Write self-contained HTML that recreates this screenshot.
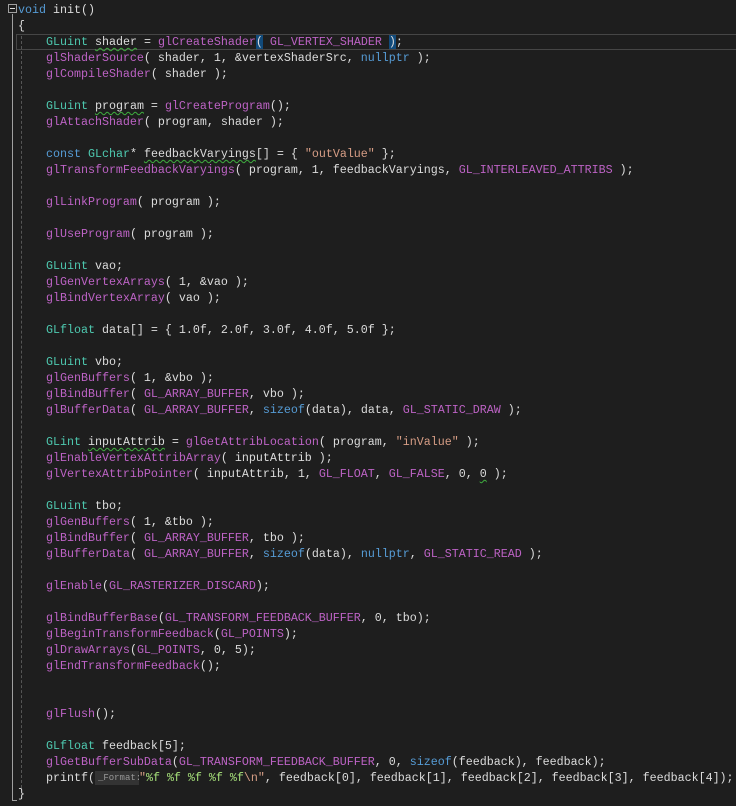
<!DOCTYPE html>
<html><head><meta charset="utf-8"><style>
html,body{margin:0;padding:0;background:#1e1e1e;width:736px;height:806px;overflow:hidden}
#c{position:absolute;left:0;top:0;width:736px;height:806px}
.l{position:absolute;left:18px;height:16px;line-height:16px;white-space:pre;font-family:"Liberation Mono",monospace;font-size:11.67px;color:#dcdcdc}
.t{color:#4ec9b0}.f{color:#bd63c5}.k{color:#569cd6}.s{color:#d69d85}.n{color:#b5cea8}.g{color:#a6e07a}
.w{text-decoration:underline wavy #3fae3f;text-decoration-thickness:1px;text-underline-offset:2px}
.h{display:inline-block;background:#333;color:#999;font-size:9px;padding:0 3px;height:14px;line-height:14px;vertical-align:top;margin-top:1px;width:44px;box-sizing:border-box;overflow:hidden}
</style></head><body><div id="c">
<div style="position:absolute;left:8px;top:4px;width:9px;height:9px;border:1px solid #a0a0a0;box-sizing:border-box"></div>
<div style="position:absolute;left:10px;top:8px;width:5px;height:1px;background:#dcdcdc"></div>
<div style="position:absolute;left:12px;top:14px;width:1px;height:787px;background:#a0a0a0"></div>
<div style="position:absolute;left:12px;top:800px;width:5px;height:1px;background:#a0a0a0"></div>
<div style="position:absolute;left:21px;top:36px;width:0;height:752px;border-left:1px dashed #555"></div>
<div style="position:absolute;left:16px;top:34px;width:722px;height:16px;border:1px solid #464646;box-sizing:border-box"></div>
<div id="code"></div>
</div>
<script>
var L=[
'<span class="k">void</span> init()',
'{',
'    <span class="t">GLuint</span> <span class="w">shader</span> = <span class="f">glCreateShader</span><span style="background:#114a7a">(</span> <span class="f">GL_VERTEX_SHADER</span> <span style="background:#114a7a">)</span>;',
'    <span class="f">glShaderSource</span>( shader, 1, &vertexShaderSrc, <span class="k">nullptr</span> );',
'    <span class="f">glCompileShader</span>( shader );',
'',
'    <span class="t">GLuint</span> <span class="w">program</span> = <span class="f">glCreateProgram</span>();',
'    <span class="f">glAttachShader</span>( program, shader );',
'',
'    <span class="k">const</span> <span class="t">GLchar</span>* <span class="w">feedbackVaryings</span>[] = { <span class="s">"outValue"</span> };',
'    <span class="f">glTransformFeedbackVaryings</span>( program, 1, feedbackVaryings, <span class="f">GL_INTERLEAVED_ATTRIBS</span> );',
'',
'    <span class="f">glLinkProgram</span>( program );',
'',
'    <span class="f">glUseProgram</span>( program );',
'',
'    <span class="t">GLuint</span> vao;',
'    <span class="f">glGenVertexArrays</span>( 1, &vao );',
'    <span class="f">glBindVertexArray</span>( vao );',
'',
'    <span class="t">GLfloat</span> data[] = { 1.0f, 2.0f, 3.0f, 4.0f, 5.0f };',
'',
'    <span class="t">GLuint</span> vbo;',
'    <span class="f">glGenBuffers</span>( 1, &vbo );',
'    <span class="f">glBindBuffer</span>( <span class="f">GL_ARRAY_BUFFER</span>, vbo );',
'    <span class="f">glBufferData</span>( <span class="f">GL_ARRAY_BUFFER</span>, <span class="k">sizeof</span>(data), data, <span class="f">GL_STATIC_DRAW</span> );',
'',
'    <span class="t">GLint</span> <span class="w">inputAttrib</span> = <span class="f">glGetAttribLocation</span>( program, <span class="s">"inValue"</span> );',
'    <span class="f">glEnableVertexAttribArray</span>( inputAttrib );',
'    <span class="f">glVertexAttribPointer</span>( inputAttrib, 1, <span class="f">GL_FLOAT</span>, <span class="f">GL_FALSE</span>, 0, <span class="w">0</span> );',
'',
'    <span class="t">GLuint</span> tbo;',
'    <span class="f">glGenBuffers</span>( 1, &tbo );',
'    <span class="f">glBindBuffer</span>( <span class="f">GL_ARRAY_BUFFER</span>, tbo );',
'    <span class="f">glBufferData</span>( <span class="f">GL_ARRAY_BUFFER</span>, <span class="k">sizeof</span>(data), <span class="k">nullptr</span>, <span class="f">GL_STATIC_READ</span> );',
'',
'    <span class="f">glEnable</span>(<span class="f">GL_RASTERIZER_DISCARD</span>);',
'',
'    <span class="f">glBindBufferBase</span>(<span class="f">GL_TRANSFORM_FEEDBACK_BUFFER</span>, 0, tbo);',
'    <span class="f">glBeginTransformFeedback</span>(<span class="f">GL_POINTS</span>);',
'    <span class="f">glDrawArrays</span>(<span class="f">GL_POINTS</span>, 0, 5);',
'    <span class="f">glEndTransformFeedback</span>();',
'',
'',
'    <span class="f">glFlush</span>();',
'',
'    <span class="t">GLfloat</span> feedback[5];',
'    <span class="f">glGetBufferSubData</span>(<span class="f">GL_TRANSFORM_FEEDBACK_BUFFER</span>, 0, <span class="k">sizeof</span>(feedback), feedback);',
'    printf(<span class="h">_Format:</span><span class="s">"</span><span class="g">%f %f %f %f %f</span><span class="s">\\n"</span>, feedback[0], feedback[1], feedback[2], feedback[3], feedback[4]);',
'}'
];
var h='';
for(var i=0;i<L.length;i++){h+='<div class="l" style="top:'+(2+16*i)+'px">'+L[i]+'</div>';}
document.getElementById('code').innerHTML=h;
</script>
</body></html>
